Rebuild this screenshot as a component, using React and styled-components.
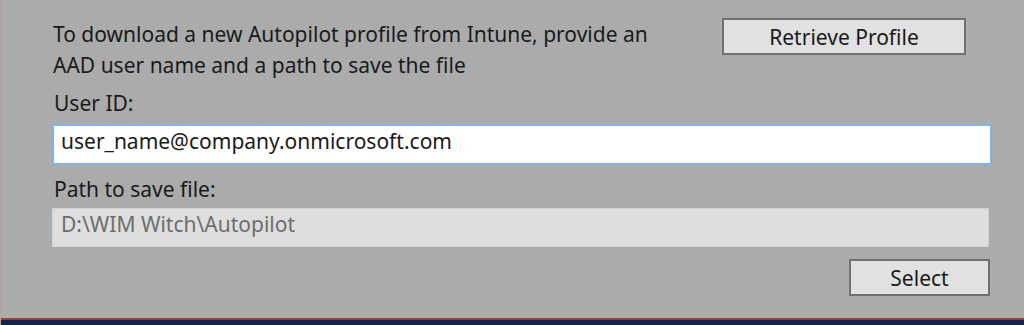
import React from "react";
import styled, { createGlobalStyle } from "styled-components";

const Global = createGlobalStyle`
  html, body {
    margin: 0;
    padding: 0;
    background: #ababab;
  }
  body {
    font-family: "Noto Sans", "Open Sans", sans-serif;
    width: 1024px;
    height: 325px;
    overflow: hidden;
  }
`;

const Window = styled.div`
  width: 1024px;
  height: 325px;
  display: flex;
  flex-direction: column;
  background: #ababab;
  border-left: 1px solid #b0a2a2;
  box-sizing: border-box;
`;

const Panel = styled.div`
  flex: 1;
  display: flex;
  flex-direction: column;
  padding: 18px 0 0 51px;
  width: 940px;
`;

const TopRow = styled.div`
  display: flex;
  justify-content: space-between;
  align-items: flex-start;
`;

const Intro = styled.p`
  margin: 1px 0 0 1px;
  font-size: 21px;
  line-height: 31px;
  color: #1a1a1a;
  white-space: nowrap;
`;

const Button = styled.button`
  font-family: inherit;
  font-size: 21px;
  line-height: 28px;
  color: #1a1a1a;
  background: #e1e1e1;
  border: 2px solid #707070;
  box-sizing: border-box;
  height: 37px;
  width: ${(p) => p.$width}px;
  margin-right: ${(p) => p.$right || 0}px;
  padding: 1px 0 0 0;
  cursor: pointer;
`;

const Label = styled.div`
  font-size: 21px;
  line-height: 31px;
  color: #1a1a1a;
  margin-top: ${(p) => p.$top}px;
  padding-left: 2px;
`;

const Field = styled.div`
  box-sizing: border-box;
  height: ${(p) => (p.$disabled ? 39 : 41)}px;
  width: ${(p) => (p.$disabled ? 937 : 940)}px;
  margin-top: ${(p) => p.$top}px;
  padding: 1px 0 0 ${(p) => (p.$disabled ? 8 : 7)}px;
  font-size: 21px;
  line-height: 28px;
  white-space: nowrap;
  background: ${(p) => (p.$disabled ? "#dedede" : "#ffffff")};
  color: ${(p) => (p.$disabled ? "#6d6d6d" : "#1a1a1a")};
  border: ${(p) => (p.$disabled ? "1px solid #d2d2d2" : "2px solid #7eb4ea")};
`;

const ActionRow = styled.div`
  display: flex;
  justify-content: flex-end;
  margin-top: 12px;
`;

const BottomBar = styled.div`
  height: 5px;
  background: #0b2452;
  border-top: 2px solid #9c3c3c;
`;

export default function App() {
  return (
    <>
      <Global />
      <Window>
        <Panel>
          <TopRow>
            <Intro>
              To download a new Autopilot profile from Intune, provide an
              <br />
              AAD user name and a path to save the file
            </Intro>
            <Button $width={244} $right={26}>Retrieve Profile</Button>
          </TopRow>
          <Label $top={7}>User ID:</Label>
          <Field $top={5}>user_name@company.onmicrosoft.com</Field>
          <Label $top={9}>Path to save file:</Label>
          <Field $top={3} $disabled>D:\WIM Witch\Autopilot</Field>
          <ActionRow>
            <Button $width={141} $right={2}>Select</Button>
          </ActionRow>
        </Panel>
        <BottomBar />
      </Window>
    </>
  );
}
